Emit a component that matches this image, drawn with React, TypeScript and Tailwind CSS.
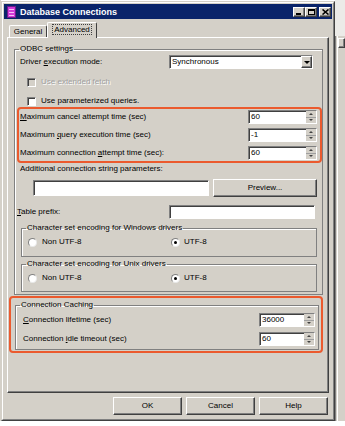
import React from 'react';

const raised =
  'border border-t-white border-l-white border-r-[#404040] border-b-[#404040] shadow-[inset_-1px_-1px_0_#808080]';
const sunken =
  'border border-t-[#808080] border-l-[#808080] border-r-white border-b-white shadow-[inset_1px_1px_0_#404040]';

const Spin: React.FC = () => (
  <div className="flex flex-col w-[10px] h-full">
    <div className="flex-1 flex items-center justify-center bg-[#d4d0c8] border-b border-b-[#a0a0a0]">
      <div className="w-0 h-0 border-x-[2px] border-x-transparent border-b-[2px] border-b-[#404040]" />
    </div>
    <div className="flex-1 flex items-center justify-center bg-[#d4d0c8]">
      <div className="w-0 h-0 border-x-[2px] border-x-transparent border-t-[2px] border-t-[#404040]" />
    </div>
  </div>
);

const NumberBox: React.FC<{ value: string; width: string }> = ({ value, width }) => (
  <div className={`flex h-[14px] bg-white ${sunken} ${width}`}>
    <span className="flex-1 pl-[2px] leading-[12px]">{value}</span>
    <Spin />
  </div>
);

const Check: React.FC<{ disabled?: boolean }> = ({ disabled }) => (
  <div className={`w-[9px] h-[9px] ${sunken} ${disabled ? 'bg-[#d4d0c8]' : 'bg-white'}`} />
);

const Radio: React.FC<{ checked?: boolean }> = ({ checked }) => (
  <div className="w-[9px] h-[9px] rounded-full bg-white border border-t-[#808080] border-l-[#808080] border-r-[#e8e8e8] border-b-[#e8e8e8] flex items-center justify-center">
    {checked && <div className="w-[3px] h-[3px] rounded-full bg-black" />}
  </div>
);

const Btn: React.FC<{ label: string; width: string }> = ({ label, width }) => (
  <div className={`h-[18px] flex items-center justify-center bg-[#d4d0c8] ${raised} ${width}`}>{label}</div>
);

const TitleButton: React.FC<{ children: React.ReactNode }> = ({ children }) => (
  <div className={`w-[12px] h-[10px] bg-[#d4d0c8] flex items-center justify-center ${raised}`}>{children}</div>
);

const Row: React.FC<{ label: React.ReactNode; value: string; labelW: string; inputW: string; className: string }> = ({
  label,
  value,
  labelW,
  inputW,
  className,
}) => (
  <div className={`flex items-center h-[14px] ${className}`}>
    <span className={`${labelW} leading-[10px]`}>{label}</span>
    <NumberBox value={value} width={inputW} />
  </div>
);

const EncodingGroup: React.FC<{ title: string; className: string }> = ({ title, className }) => (
  <fieldset className={`w-[296px] ml-[4px] border border-[#808080] shadow-[inset_1px_1px_0_white] ${className}`}>
    <legend className="ml-[4px] px-[1px] leading-[10px]">{title}</legend>
    <div className="flex items-center h-[10px] mt-[4px] pl-[6px]">
      <div className="flex items-center w-[143px]">
        <Radio />
        <span className="ml-[5px]">Non UTF-8</span>
      </div>
      <Radio checked />
      <span className="ml-[4px]">UTF-8</span>
    </div>
  </fieldset>
);

export default function App() {
  return (
    <div className="w-[345px] h-[426px] bg-white overflow-hidden text-[8px] leading-[10px] text-black font-['Liberation_Sans',Arial,sans-serif]">
      <div className="flex h-[421px]">
        <div className="w-[1px] bg-[#d4d0c8]" />

        {/* dialog window */}
        <div className="w-[334px] h-[421px] pt-[1px]">
          <div className="h-[420px] border border-t-[#d4d0c8] border-l-[#d4d0c8] border-r-[#404040] border-b-[#404040]">
            <div className="h-full border border-t-white border-l-white border-r-[#808080] border-b-[#808080] p-px bg-[#d4d0c8] flex flex-col">
              {/* title bar */}
              <div className="h-[15px] bg-[#0a246a] flex items-center pl-[3px] pr-[1px]">
                <svg width="9" height="12" viewBox="0 0 9 12">
                  <rect x="0" y="0" width="9" height="12" fill="#6a1a8a" />
                  <rect x="1" y="1" width="7" height="10" fill="#d23ad8" />
                  <rect x="2" y="3" width="5" height="1" fill="#f7c0f8" />
                  <rect x="2" y="6" width="5" height="1" fill="#f7c0f8" />
                  <rect x="2" y="9" width="5" height="1" fill="#f7c0f8" />
                </svg>
                <span className="ml-[4px] text-white font-bold text-[9px]">Database Connections</span>
                <div className="flex-1" />
                <div className="flex items-center">
                  <TitleButton>
                    <div className="w-[5px] h-[2px] bg-black mt-[4px] -ml-[1px]" />
                  </TitleButton>
                  <TitleButton>
                    <div className="w-[7px] h-[6px] border border-black border-t-2" />
                  </TitleButton>
                  <div className="w-[2px]" />
                  <TitleButton>
                    <svg width="7" height="6" viewBox="0 0 7 6">
                      <path d="M0.5 0.5 L6.5 5.5 M6.5 0.5 L0.5 5.5" stroke="black" strokeWidth="1.6" />
                    </svg>
                  </TitleButton>
                </div>
              </div>

              {/* body */}
              <div className="flex-1 flex flex-col px-[3px]">
                {/* tabs */}
                <div className="h-[18px] flex items-end pl-[2px]">
                  <div className="w-[38px] h-[12px] border border-b-0 border-t-white border-l-white border-r-[#404040] rounded-t-[2px] flex items-center justify-center">
                    General
                  </div>
                  <div className="relative z-10 w-[50px] h-[16px] -mb-[1px] bg-[#d4d0c8] border border-b-0 border-t-white border-l-white border-r-[#404040] rounded-t-[2px] flex items-start justify-center pt-[1px]">
                    <span className="border border-dotted border-[#404040] px-[1px] leading-[9px]">Advanced</span>
                  </div>
                </div>

                {/* tab panel */}
                <div className={`h-[356px] p-px ${raised}`}>
                  <fieldset className="ml-[5px] mt-[5px] w-[309px] border border-[#808080] shadow-[inset_1px_1px_0_white] pl-[2px] pb-[2px]">
                    <legend className="ml-[2px] px-[1px] leading-[10px]">ODBC settings</legend>

                    <div className="flex items-center h-[14px] mt-[1px] pl-[3px]">
                      <span className="w-[149px]">
                        Driver <span className="underline">e</span>xecution mode:
                      </span>
                      <div className={`w-[144px] h-[14px] bg-white flex ${sunken}`}>
                        <span className="flex-1 pl-[2px] leading-[12px]">Synchronous</span>
                        <div className={`w-[11px] h-full bg-[#d4d0c8] flex items-center justify-center ${raised}`}>
                          <div className="w-0 h-0 border-x-[3px] border-x-transparent border-t-[3px] border-t-black" />
                        </div>
                      </div>
                    </div>

                    <div className="flex items-center h-[10px] mt-[8px] pl-[10px]">
                      <Check disabled />
                      <span className="ml-[5px] text-[#a0a0a0] [text-shadow:1px_1px_0_white]">Use extended fetch</span>
                    </div>
                    <div className="flex items-center h-[10px] mt-[9px] pl-[10px]">
                      <Check />
                      <span className="ml-[5px]">Use parameterized queries.</span>
                    </div>

                    {/* highlighted timeouts */}
                    <div className="mt-[1px] h-[56px] border-2 border-[#eb5a2e] rounded-[4px] pl-[1px] pt-[1px] flex flex-col gap-[4px]">
                      <Row
                        labelW="w-[228px]"
                        inputW="w-[69px]"
                        className=""
                        value="60"
                        label={
                          <>
                            <span className="underline">M</span>aximum cancel attempt time (sec)
                          </>
                        }
                      />
                      <Row
                        labelW="w-[228px]"
                        inputW="w-[69px]"
                        className=""
                        value="-1"
                        label={
                          <>
                            Maximum <span className="underline">q</span>uery execution time (sec)
                          </>
                        }
                      />
                      <Row
                        labelW="w-[228px]"
                        inputW="w-[69px]"
                        className=""
                        value="60"
                        label={
                          <>
                            Maximum connection <span className="underline">a</span>ttempt time (sec):
                          </>
                        }
                      />
                    </div>

                    <div className="h-[10px] mt-[1px] pl-[3px]">Additional connection string parameters:</div>

                    <div className="flex items-center h-[18px] mt-[5px] pl-[16px]">
                      <div className={`w-[176px] h-[16px] bg-white ${sunken}`} />
                      <Btn label="Preview..." width="w-[104px] ml-[4px]" />
                    </div>

                    <div className="flex items-center h-[14px] mt-[8px]">
                      <span className="w-[152px]">
                        <span className="underline">T</span>able prefix:
                      </span>
                      <div className={`w-[146px] h-[14px] bg-white ${sunken}`} />
                    </div>

                    <EncodingGroup title="Character set encoding for Windows drivers" className="mt-[4px] h-[34px]" />
                    <EncodingGroup title="Character set encoding for Unix drivers" className="mt-[2px] h-[33px]" />
                  </fieldset>

                  {/* highlighted caching */}
                  <div className="mt-[1px] w-[314px] h-[57px] border-2 border-[#eb5a2e] rounded-[4px] pt-[2px] pl-[4px]">
                    <fieldset className="w-[304px] border border-[#808080] shadow-[inset_1px_1px_0_white] pb-[3px]">
                      <legend className="ml-[4px] px-[1px] leading-[10px]">Connection Caching</legend>
                      <Row
                        labelW="w-[236px]"
                        inputW="w-[56px]"
                        className="mt-[3px] pl-[7px]"
                        value="36000"
                        label={
                          <>
                            <span className="underline">C</span>onnection lifetime (sec)
                          </>
                        }
                      />
                      <Row
                        labelW="w-[236px]"
                        inputW="w-[56px]"
                        className="mt-[5px] pl-[7px]"
                        value="60"
                        label={
                          <>
                            Connection <span className="underline">i</span>dle timeout (sec)
                          </>
                        }
                      />
                    </fieldset>
                  </div>
                </div>

                {/* dialog buttons */}
                <div className="flex justify-end gap-[4px] mt-[4px] pr-[1px]">
                  <Btn label="OK" width="w-[69px]" />
                  <Btn label="Cancel" width="w-[69px]" />
                  <Btn label="Help" width="w-[69px]" />
                </div>
              </div>
            </div>
          </div>
        </div>

        {/* window behind, right edge */}
        <div className="flex-1 flex flex-col bg-[#d4d0c8]">
          <div className="h-[36px] bg-[#ecebe8]" />
          <div className="flex-1 flex border-l border-l-[#808080]">
            <div className="w-[2px] border-r border-r-white" />
            <div className="flex-1 flex flex-col pt-[2px]">
              <div className={`h-[10px] bg-[#d4d0c8] ${raised}`} />
            </div>
          </div>
        </div>
      </div>
    </div>
  );
}
